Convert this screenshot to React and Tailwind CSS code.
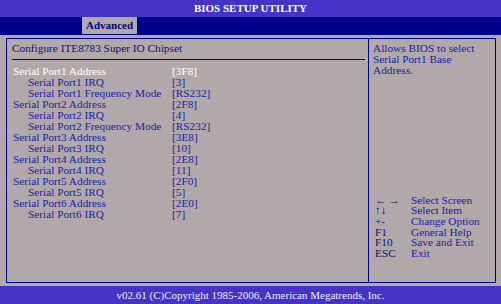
import React from 'react';

const items = [
  { label: 'Serial Port1 Address', value: '[3F8]', sub: false, selected: true },
  { label: 'Serial Port1 IRQ', value: '[3]', sub: true },
  { label: 'Serial Port1 Frequency Mode', value: '[RS232]', sub: true },
  { label: 'Serial Port2 Address', value: '[2F8]', sub: false },
  { label: 'Serial Port2 IRQ', value: '[4]', sub: true },
  { label: 'Serial Port2 Frequency Mode', value: '[RS232]', sub: true },
  { label: 'Serial Port3 Address', value: '[3E8]', sub: false },
  { label: 'Serial Port3 IRQ', value: '[10]', sub: true },
  { label: 'Serial Port4 Address', value: '[2E8]', sub: false },
  { label: 'Serial Port4 IRQ', value: '[11]', sub: true },
  { label: 'Serial Port5 Address', value: '[2F0]', sub: false },
  { label: 'Serial Port5 IRQ', value: '[5]', sub: true },
  { label: 'Serial Port6 Address', value: '[2E0]', sub: false },
  { label: 'Serial Port6 IRQ', value: '[7]', sub: true },
];

const keys = [
  ['\u2190\u2009\u2192', 'Select Screen'],
  ['\u2191\u2193', 'Select Item'],
  ['+-', 'Change Option'],
  ['F1', 'General Help'],
  ['F10', 'Save and Exit'],
  ['ESC', 'Exit'],
];

const App = () => {
  return (
    <div className="w-[501px] h-[304px] flex flex-col bg-[#b1a9a9] overflow-hidden text-[11.3px] leading-[11px]" style={{ fontFamily: '"Liberation Serif", "DejaVu Serif", serif' }}>
      <div className="h-[17px] bg-[#4433c4] flex items-center justify-center text-white font-bold text-[11px]">
        BIOS SETUP UTILITY
      </div>
      <div className="h-[18px] bg-[#00008f] flex items-start pl-[82px]">
        <div className="h-[17px] w-[55px] bg-[#b1a9a9] flex items-center justify-center font-bold text-[11px] text-[#00007a]">
          Advanced
        </div>
      </div>

      <div className="flex-1 pt-[3px] pl-[6px]">
        <div className="w-[490px] h-[245px] border border-[#00008f] flex">
          <div className="w-[361px] flex flex-col">
            <div className="pt-[4px] pl-[5px] h-[20px] text-[#10106e]">Configure ITE8783 Super IO Chipset</div>
            <div className="ml-[5px] mr-[3px] h-px bg-[#00008f]"></div>
            <div className="mt-[6px] flex flex-col">
              {items.map((it) => (
                <div key={it.label} className={`flex h-[11px] items-center ${it.selected ? 'text-white' : 'text-[#1c1ca8]'}`}>
                  <div className={`w-[165px] ${it.sub ? 'pl-[21px]' : 'pl-[6px]'}`}>{it.label}</div>
                  <div>{it.value}</div>
                </div>
              ))}
            </div>
          </div>
          <div className="w-px bg-[#00008f]"></div>
          <div className="flex-1 flex flex-col pl-[4px] pt-[4px] text-[#1c1ca8]">
            <div>Allows BIOS to select</div>
            <div>Serial Port1 Base</div>
            <div>Address.</div>
            <div className="mt-[119px] flex flex-col">
              {keys.map(([k, d]) => (
                <div key={d} className="flex h-[10.6px] items-center">
                  <div className="w-[38px] pl-[2px] text-[#10106e]">{k}</div>
                  <div>{d}</div>
                </div>
              ))}
            </div>
          </div>
        </div>
      </div>

      <div className="h-[18px] bg-[#4433c4] flex items-center justify-center text-[11px] text-[#ececff]">
        v02.61 (C)Copyright 1985-2006, American Megatrends, Inc.
      </div>
    </div>
  );
};

export default App;
